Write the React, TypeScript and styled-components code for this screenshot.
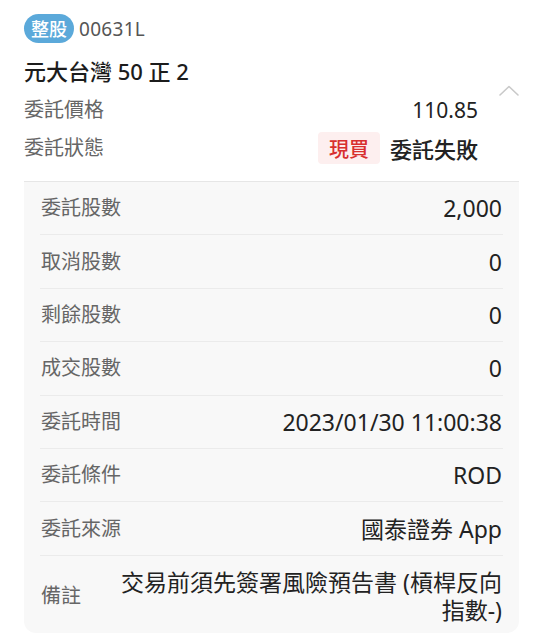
import React from "react";
import styled, { createGlobalStyle } from "styled-components";

const GlobalStyle = createGlobalStyle`
	html, body {
		margin: 0;
		padding: 0;
		background: #ffffff;
	}
	body {
		font-family: "Noto Sans", "Noto Sans CJK TC", sans-serif;
		-webkit-font-smoothing: antialiased;
	}
`;

const Card = styled.div`
	width: 543px;
	padding: 14px 24px 6px;
	box-sizing: border-box;
`;

const Summary = styled.div`
	display: grid;
	grid-template-columns: 1fr 20px;
	column-gap: 21px;
	padding-bottom: 17px;
`;

const CodeLine = styled.div`
	grid-column: 1 / 2;
	display: flex;
	align-items: center;
	gap: 5px;
	height: 29px;
`;

const TypeBadge = styled.span`
	display: inline-flex;
	align-items: center;
	justify-content: center;
	height: 29px;
	padding: 0 7px;
	border-radius: 15px;
	background: #5ba9da;
	color: #ffffff;
	font-size: 18px;
	font-weight: 500;
	line-height: 1;
`;

const Code = styled.span`
	color: #555555;
	font-size: 19px;
	letter-spacing: 0.3px;
`;

const Title = styled.div`
	grid-column: 1 / 2;
	margin-top: 13px;
	color: #1c1c1c;
	font-size: 22px;
	font-weight: 500;
	line-height: 30px;
`;

const Toggle = styled.button`
	grid-column: 2 / 3;
	grid-row: 2 / 4;
	align-self: center;
	margin: 12px 0 0;
	padding: 0;
	border: 0;
	background: none;
	width: 20px;
	height: 11px;
	display: flex;
`;

const SummaryRow = styled.div<{ $gap: number }>`
	grid-column: 1 / 2;
	display: flex;
	align-items: center;
	justify-content: space-between;
	margin-top: ${(p) => p.$gap}px;
	min-height: 30px;
`;

const Label = styled.span`
	color: #666666;
	font-size: 20px;
	line-height: 30px;
	white-space: nowrap;
`;

const Value = styled.span<{ $size?: number }>`
	color: #222222;
	font-size: ${(p) => p.$size ?? 23}px;
	line-height: 30px;
	text-align: right;
`;

const StatusGroup = styled.div`
	display: flex;
	align-items: center;
	gap: 10px;
`;

const SideTag = styled.span`
	display: inline-flex;
	align-items: center;
	height: 32px;
	padding: 0 11px;
	border-radius: 4px;
	background: #fdefef;
	color: #d8302f;
	font-size: 20px;
	font-weight: 500;
`;

const StatusText = styled.span`
	color: #222222;
	font-size: 22px;
	font-weight: 500;
`;

const Panel = styled.div`
	background: #f8f8f8;
	border-top: 1px solid #e6e6e6;
	border-radius: 0 0 12px 12px;
	padding: 0 16px;
`;

const DetailRow = styled.div`
	display: flex;
	align-items: center;
	justify-content: space-between;
	height: 53.4px;
	box-sizing: border-box;
	border-bottom: 1px solid #ebebeb;
	padding: 0 1px;
`;

const NoteRow = styled.div`
	display: flex;
	align-items: center;
	justify-content: space-between;
	padding: 12px 1px 9px;
	gap: 20px;
`;

const NoteText = styled.div`
	max-width: 392px;
	color: #222222;
	font-size: 23px;
	line-height: 28px;
	text-align: right;
`;

const Chevron = () => (
	<svg width="20" height="11" viewBox="0 0 20 11" fill="none">
		<polyline
			points="1,10 10,1.5 19,10"
			stroke="#c9c9c9"
			strokeWidth="1.6"
			strokeLinecap="round"
			strokeLinejoin="round"
		/>
	</svg>
);

const details: { label: string; value: string }[] = [
	{ label: "委託股數", value: "2,000" },
	{ label: "取消股數", value: "0" },
	{ label: "剩餘股數", value: "0" },
	{ label: "成交股數", value: "0" },
	{ label: "委託時間", value: "2023/01/30 11:00:38" },
	{ label: "委託條件", value: "ROD" },
	{ label: "委託來源", value: "國泰證券 App" },
];

const App: React.FC = () => {
	return (
		<>
			<GlobalStyle />
			<Card>
				<Summary>
					<CodeLine>
						<TypeBadge>整股</TypeBadge>
						<Code>00631L</Code>
					</CodeLine>
					<Title>元大台灣 50 正 2</Title>
					<Toggle aria-label="收合">
						<Chevron />
					</Toggle>
					<SummaryRow $gap={9}>
						<Label>委託價格</Label>
						<Value $size={21}>110.85</Value>
					</SummaryRow>
					<SummaryRow $gap={7}>
						<Label>委託狀態</Label>
						<StatusGroup>
							<SideTag>現買</SideTag>
							<StatusText>委託失敗</StatusText>
						</StatusGroup>
					</SummaryRow>
				</Summary>
				<Panel>
					{details.map((d) => (
						<DetailRow key={d.label}>
							<Label>{d.label}</Label>
							<Value>{d.value}</Value>
						</DetailRow>
					))}
					<NoteRow>
						<Label>備註</Label>
						<NoteText>交易前須先簽署風險預告書 (槓桿反向指數-)</NoteText>
					</NoteRow>
				</Panel>
			</Card>
		</>
	);
};

export default App;
